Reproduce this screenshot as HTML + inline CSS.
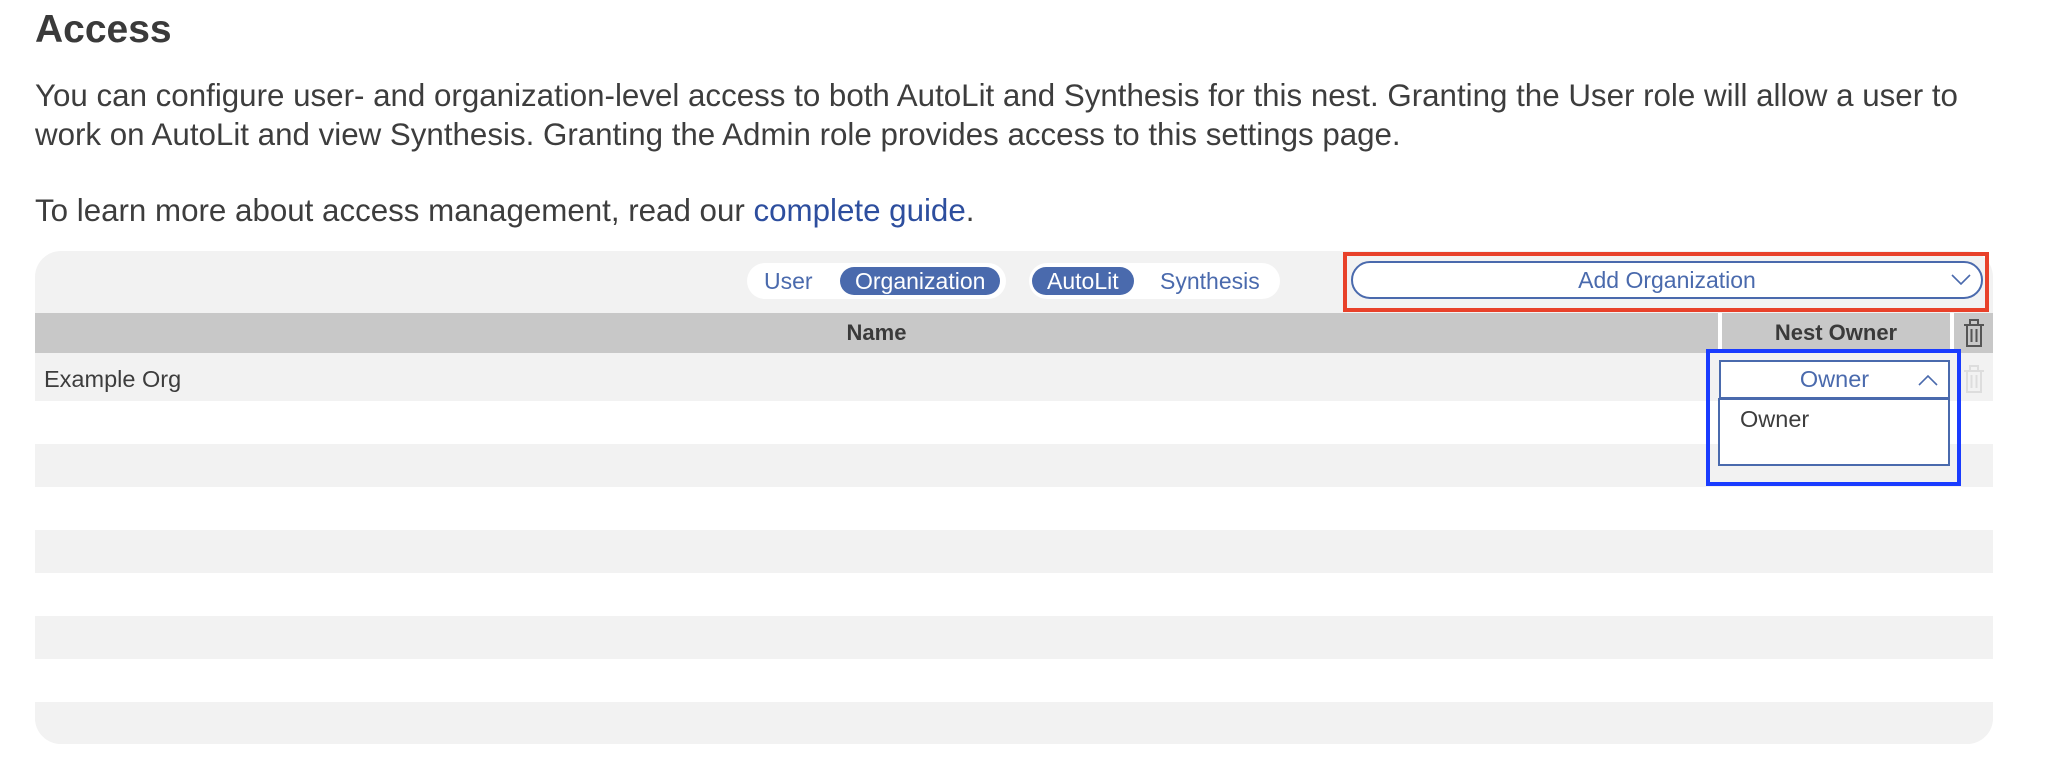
<!DOCTYPE html>
<html><head><meta charset="utf-8"><style>
*{box-sizing:border-box;margin:0;padding:0}
body{width:2048px;height:775px;background:#fff;font-family:"Liberation Sans",sans-serif;color:#444;position:relative;overflow:hidden}
.a{position:absolute}
h1{position:absolute;left:35px;top:8px;font-size:39px;font-weight:bold;color:#3a3a3a}
.p{position:absolute;left:35px;font-size:31.3px;line-height:39px;color:#3d3d3d;width:2010px;white-space:nowrap}
.link{color:#2d4e9e}
.box{left:35px;top:251px;width:1958px;height:493px;background:#f2f2f2;border-radius:26px;overflow:hidden}
.row{position:absolute;left:0;width:1958px;height:43px}
.pill{position:absolute;background:#fff;border-radius:18px;height:36px;top:263px}
.pill span{position:absolute;top:4px;height:28px;line-height:28px;font-size:23px;color:#4a6aad;padding:0 15px;border-radius:14px}
.pill span.on{background:#4a6aad;color:#fff}
</style></head><body>
<h1>Access</h1>
<div class="p" style="top:76px">You can configure user- and organization-level access to both AutoLit and Synthesis for this nest. Granting the User role will allow a user to<br>work on AutoLit and view Synthesis. Granting the Admin role provides access to this settings page.</div>
<div class="p" style="top:191px">To learn more about access management, read our <span class="link">complete guide</span>.</div>
<div class="a box">
 <div class="row" style="top:62px;height:40px;background:#c8c8c8"></div>
 <div class="row" style="top:107px;background:#f2f2f2"></div>
 <div class="row" style="top:150px;background:#fff"></div>
 <div class="row" style="top:193px;background:#f2f2f2"></div>
 <div class="row" style="top:236px;background:#fff"></div>
 <div class="row" style="top:279px;background:#f2f2f2"></div>
 <div class="row" style="top:322px;background:#fff"></div>
 <div class="row" style="top:365px;background:#f2f2f2"></div>
 <div class="row" style="top:408px;background:#fff"></div>
 <div class="row" style="top:451px;background:#f2f2f2;height:42px"></div>
 <div class="a" style="left:1683px;top:62px;width:4px;height:40px;background:#fff"></div>
 <div class="a" style="left:1915px;top:62px;width:4px;height:40px;background:#fff"></div>
 <div class="a" style="left:0;top:62px;width:1683px;text-align:center;line-height:40px;font-size:22px;font-weight:bold;color:#3a3a3a">Name</div>
 <div class="a" style="left:1687px;top:62px;width:228px;text-align:center;line-height:40px;font-size:22px;font-weight:bold;color:#3a3a3a">Nest Owner</div>
 <div class="a" style="left:9px;top:107px;line-height:43px;font-size:23.5px;color:#3d3d3d">Example Org</div>
</div>
<div class="pill" style="left:747px;width:259px"><span style="left:2px">User</span><span class="on" style="left:93px">Organization</span></div>
<div class="pill" style="left:1029px;width:251px"><span class="on" style="left:3px">AutoLit</span><span style="left:116px">Synthesis</span></div>
<div class="a" style="left:1343px;top:252px;width:646px;height:60px;border:4px solid #e8412a"></div>
<div class="a" style="left:1351px;top:261px;width:632px;height:38px;border:2px solid #4a6aad;border-radius:19px;background:#fff;text-align:center;line-height:34px;font-size:23px;color:#4a6aad">Add Organization
 <svg class="a" style="right:10px;top:10px" width="20" height="14" viewBox="0 0 20 14"><path d="M1 2l9 9 9-9" fill="none" stroke="#4a6aad" stroke-width="1.6"/></svg></div>
<svg class="a" style="left:1962px;top:318px" width="24" height="30" viewBox="0 0 24 30"><path d="M2 7h20M8 7V2h8v5M5 7v21h14V7M9.5 11v13M14.5 11v13" fill="none" stroke="#555" stroke-width="2"/></svg>
<svg class="a" style="left:1962px;top:364px" width="24" height="30" viewBox="0 0 24 30"><path d="M2 7h20M8 7V2h8v5M5 7v21h14V7M9.5 11v13M14.5 11v13" fill="none" stroke="#ddd" stroke-width="2"/></svg>
<div class="a" style="left:1719px;top:360px;width:231px;height:39px;border:2px solid #4a6aad;background:#fff;text-align:center;line-height:35px;font-size:23.5px;color:#4a6aad">Owner
 <svg class="a" style="right:10px;top:11px" width="20" height="14" viewBox="0 0 20 14"><path d="M1 12l9-9 9 9" fill="none" stroke="#4a6aad" stroke-width="1.6"/></svg></div>
<div class="a" style="left:1718px;top:398px;width:232px;height:68px;border:2px solid #4a6aad;background:#fff;padding:6px 0 0 20px;font-size:23.5px;color:#3d3d3d">Owner</div>
<div class="a" style="left:1706px;top:349px;width:255px;height:137px;border:4px solid #1a3cff"></div>
</body></html>
